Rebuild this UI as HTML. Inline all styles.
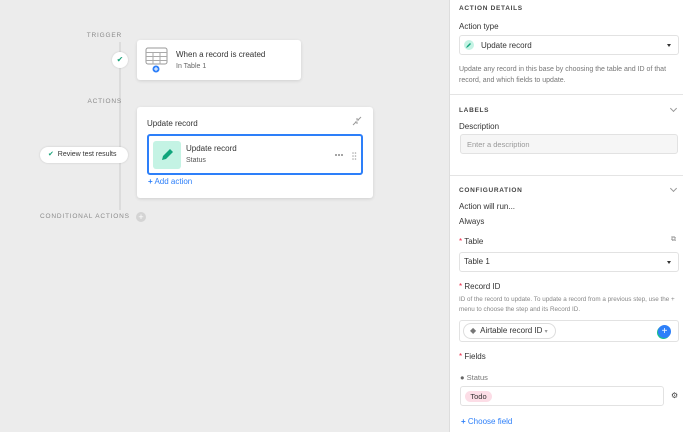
<!DOCTYPE html>
<html><head><meta charset="utf-8"><style>
*{box-sizing:border-box;margin:0;padding:0}
body{width:683px;height:432px;overflow:hidden;background:#ececec;font-family:"Liberation Sans",sans-serif;color:#333;position:relative;font-size:8px}
.a{position:absolute}
.lbl{font-size:6.5px;letter-spacing:.8px;color:#8a8a8a;text-transform:uppercase}
.card{background:#fff;border-radius:3px;box-shadow:0 1px 3px rgba(0,0,0,.12)}
.panel{left:449px;top:0;width:234px;height:432px;background:#fff;border-left:1px solid #ddd}
.sec{font-size:6.5px;letter-spacing:.7px;color:#444;font-weight:bold}
.inp{border:1px solid #e2e2e2;border-radius:3px;background:#fff}
.hr{height:1px;background:#e4e4e4;left:0;width:234px}
.red{color:#e24}
.chev{width:5px;height:5px;border-right:1px solid #999;border-bottom:1px solid #999;transform:rotate(45deg)}
.tri{width:0;height:0;border-left:2.5px solid transparent;border-right:2.5px solid transparent;border-top:3px solid #333}
</style></head><body>
<div class="a" style="left:119px;top:42px;width:2px;height:168px;background:#dcdcdc"></div>
<div class="a lbl" style="left:60px;top:32px;width:62px;text-align:right">Trigger</div>
<div class="a" style="left:112px;top:52px;width:16px;height:16px;border-radius:50%;background:#fff;box-shadow:0 0 2px rgba(0,0,0,.15);color:#1aa37a;font-size:8px;text-align:center;line-height:16px">✔</div>
<div class="a card" style="left:137px;top:40px;width:164px;height:40px"></div>
<svg class="a" style="left:145px;top:47px" width="24" height="28"><rect x="1" y="1" width="21" height="16" rx="2" fill="#fff" stroke="#999"/><path d="M1 5.5h21M1 9.5h21M1 13.5h21M8 5.5v12M15 5.5v12" stroke="#aaa"/><circle cx="11" cy="22" r="3.5" fill="#2d7ff9"/><path d="M9 22h4M11 20v4" stroke="#fff"/></svg>
<div class="a" style="left:176px;top:50px;font-size:8px">When a record is created</div>
<div class="a" style="left:176px;top:63px;font-size:7px;color:#666">In Table 1</div>
<div class="a lbl" style="left:60px;top:98px;width:62px;text-align:right">Actions</div>
<div class="a" style="left:40px;top:147px;width:88px;height:16px;border-radius:8px;background:#fff;box-shadow:0 0 2px rgba(0,0,0,.15);font-size:7px;line-height:16px;padding-left:8px"><span style="color:#1aa37a">✔</span>&nbsp; Review test results</div>
<div class="a card" style="left:137px;top:107px;width:236px;height:91px"></div>
<div class="a" style="left:147px;top:119px;font-size:8px">Update record</div>
<svg class="a" style="left:352px;top:116px" width="10" height="10"><path d="M1 9l3-3M9 1L6 4M3 6h2v2M7 4H5V2" stroke="#999" fill="none"/></svg>
<div class="a" style="left:147px;top:134px;width:216px;height:41px;border:2px solid #2d7ff9;border-radius:3px"></div>
<div class="a" style="left:153px;top:141px;width:28px;height:28px;background:#c4f3e4;border-radius:3px"></div>
<svg class="a" style="left:159px;top:147px" width="16" height="16"><path d="M3 13l1-4 7-7 3 3-7 7z" fill="#11a57c"/></svg>
<div class="a" style="left:186px;top:144px;font-size:8px">Update record</div>
<div class="a" style="left:186px;top:157px;font-size:7px;color:#555">Status</div>
<svg class="a" style="left:334px;top:152px" width="26" height="8"><circle cx="2" cy="3" r="1" fill="#888"/><circle cx="5" cy="3" r="1" fill="#888"/><circle cx="8" cy="3" r="1" fill="#888"/><circle cx="19" cy="1" r=".8" fill="#aaa"/><circle cx="21.5" cy="1" r=".8" fill="#aaa"/><circle cx="19" cy="4" r=".8" fill="#aaa"/><circle cx="21.5" cy="4" r=".8" fill="#aaa"/><circle cx="19" cy="7" r=".8" fill="#aaa"/><circle cx="21.5" cy="7" r=".8" fill="#aaa"/></svg>
<div class="a" style="left:148px;top:177px;font-size:8px;color:#2d7ff9"><b>+</b> Add action</div>
<div class="a lbl" style="left:40px;top:213px">Conditional actions</div>
<div class="a" style="left:136px;top:212px;width:10px;height:10px;border-radius:50%;background:#d4d4d4;color:#fff;font-size:9px;line-height:10px;text-align:center">+</div>

<div class="a panel">
<div class="a sec" style="left:9px;top:5px">ACTION DETAILS</div>
<div class="a" style="left:9px;top:22px;font-size:8px">Action type</div>
<div class="a inp" style="left:9px;top:35px;width:220px;height:20px"></div>
<div class="a" style="left:14px;top:40px;width:10px;height:10px;border-radius:50%;background:#c4f3e4"></div>
<svg class="a" style="left:15px;top:41px" width="8" height="8"><path d="M1 7l1-2 3-3 1 1-3 3z" fill="#11a57c"/></svg>
<div class="a" style="left:31px;top:41px;font-size:8px">Update record</div>
<div class="a tri" style="left:217px;top:44px"></div>
<div class="a" style="left:9px;top:65px;width:222px;font-size:7px;color:#777;line-height:10.5px">Update any record in this base by choosing the table and ID of that record, and which fields to update.</div>
<div class="a hr" style="top:94px"></div>
<div class="a sec" style="left:9px;top:107px">LABELS</div>
<div class="a chev" style="left:221px;top:106px"></div>
<div class="a" style="left:9px;top:122px;font-size:8px">Description</div>
<div class="a inp" style="left:10px;top:134px;width:218px;height:20px;background:#f6f6f6"></div>
<div class="a" style="left:17px;top:140px;font-size:7.5px;color:#999">Enter a description</div>
<div class="a hr" style="top:175px"></div>
<div class="a sec" style="left:9px;top:187px">CONFIGURATION</div>
<div class="a chev" style="left:221px;top:186px"></div>
<div class="a" style="left:9px;top:202px;font-size:8px">Action will run...</div>
<div class="a" style="left:9px;top:217px;font-size:8px">Always</div>
<div class="a" style="left:9px;top:237px;font-size:8px"><span class="red">*</span> Table</div>
<div class="a" style="left:221px;top:236px;font-size:7px;color:#888">⧉</div>
<div class="a inp" style="left:9px;top:252px;width:220px;height:20px"></div>
<div class="a" style="left:14px;top:257px;font-size:8px">Table 1</div>
<div class="a tri" style="left:217px;top:261px"></div>
<div class="a" style="left:9px;top:282px;font-size:8px"><span class="red">*</span> Record ID</div>
<div class="a" style="left:9px;top:295px;width:225px;font-size:6.3px;color:#888;line-height:10px">ID of the record to update. To update a record from a previous step, use the + menu to choose the step and its Record ID.</div>
<div class="a inp" style="left:9px;top:320px;width:220px;height:22px"></div>
<div class="a" style="left:13px;top:323px;width:93px;height:16px;border:1px solid #ddd;border-radius:8px;font-size:8px;line-height:14px;padding-left:6px"><span style="color:#777">◆</span>&nbsp; Airtable record ID <span style="color:#999;font-size:6px">▾</span></div>
<div class="a" style="left:208px;top:325px;width:13px;height:13px;border-radius:50%;background:#2d7ff9;box-shadow:-1px 1px 0 #18bf8f;color:#fff;font-size:10px;line-height:13px;text-align:center">+</div>
<div class="a" style="left:9px;top:352px;font-size:8px"><span class="red">*</span> Fields</div>
<div class="a" style="left:10px;top:373px;font-size:7.5px;color:#777"><span style="color:#666">●</span> Status</div>
<div class="a inp" style="left:10px;top:386px;width:204px;height:20px"></div>
<div class="a" style="left:15px;top:391px;width:27px;height:11px;border-radius:6px;background:#fcdde6;font-size:7.5px;line-height:11px;text-align:center">Todo</div>
<div class="a" style="left:221px;top:391px;font-size:8px;color:#444">⚙</div>
<div class="a" style="left:11px;top:417px;font-size:8px;color:#2d7ff9"><b>+</b> Choose field</div>
</div>
</body></html>
